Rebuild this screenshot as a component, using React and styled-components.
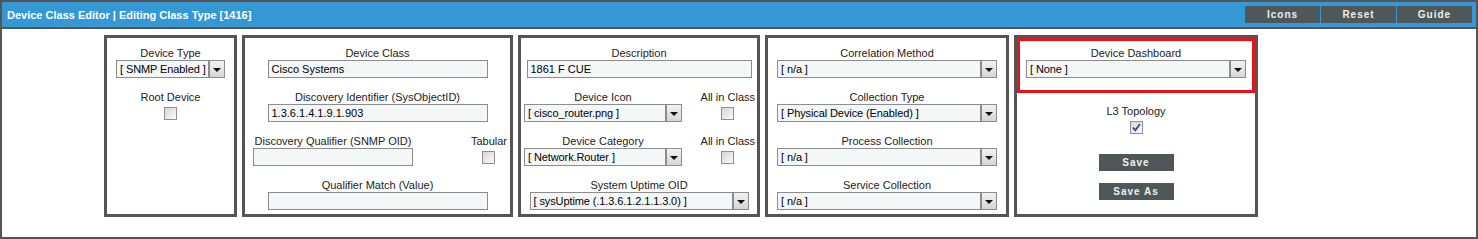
import React from 'react';
import styled, { createGlobalStyle } from 'styled-components';

const GlobalStyle = createGlobalStyle`
  body {
    margin: 0;
    background: #fff;
    font-family: "Liberation Sans", Arial, sans-serif;
  }
`;

const Frame = styled.div`
  width: 1478px;
  height: 239px;
  box-sizing: border-box;
  border: 2px solid #555;
  background: #fff;
  overflow: hidden;
`;

const Header = styled.div`
  height: 25px;
  box-sizing: content-box;
  background: #3598d4;
  border-bottom: 2px solid #555;
  display: flex;
  align-items: center;
  justify-content: space-between;
  padding: 0 4px 0 5px;
`;

const Title = styled.div`
  color: #fff;
  font-size: 11px;
  font-weight: bold;
`;

const Toolbar = styled.div`
  display: flex;
  gap: 1px;
`;

const DarkButton = styled.div`
  width: 75px;
  height: 17px;
  background: #4f5759;
  color: #eef0f0;
  font-size: 10px;
  font-weight: bold;
  letter-spacing: 1px;
  display: flex;
  align-items: center;
  justify-content: center;
`;

const Body = styled.div`
  display: flex;
  gap: 5px;
  padding: 6px 0 0 102px;
`;

const Panel = styled.div`
  width: ${(p) => p.$w}px;
  height: 182px;
  box-sizing: border-box;
  border: 3px solid #555;
  padding-top: ${(p) => (p.$flush ? 0 : 8)}px;
  display: flex;
  flex-direction: column;
  align-items: center;
  overflow: hidden;
`;

const Row = styled.div`
  align-self: stretch;
  flex-shrink: 0;
  height: 44px;
  display: flex;
  justify-content: ${(p) => (p.$split ? 'space-between' : 'center')};
  padding: 0 ${(p) => p.$pr || 0}px 0 ${(p) => p.$pl || 0}px;
`;

const Field = styled.div`
  display: flex;
  flex-direction: column;
  align-items: center;
`;

const Label = styled.div`
  font-size: 11px;
  line-height: 14px;
  color: #222;
  white-space: nowrap;
`;

const TextInput = styled.div`
  width: ${(p) => p.$w}px;
  height: 18px;
  box-sizing: border-box;
  border: 1px solid #8c8c8c;
  background: #f3f7f7;
  font-size: 11px;
  line-height: 16px;
  padding: 0 3px;
  color: #000;
  white-space: nowrap;
`;

const SelectBox = styled.div`
  width: ${(p) => p.$w}px;
  height: 18px;
  box-sizing: border-box;
  border: 1px solid #8c8c8c;
  background: #f3f7f7;
  display: flex;
  font-size: 11px;
  line-height: 16px;
  color: #000;
`;

const SelectText = styled.div`
  flex: 1;
  padding-left: 3px;
  white-space: nowrap;
  overflow: hidden;
  letter-spacing: -0.1px;
`;

const Arrow = styled.div`
  width: 16px;
  height: 16px;
  flex-shrink: 0;
  box-sizing: border-box;
  border-left: 2px solid #8c8c8c;
  background: linear-gradient(#f2f2f2, #d6d6d6);
  display: flex;
  align-items: center;
  justify-content: center;
  &::after {
    content: '';
    margin-top: 2px;
    border-left: 4px solid transparent;
    border-right: 4px solid transparent;
    border-top: 4px solid #111;
  }
`;

const Check = styled.span`
  display: block;
  width: 13px;
  height: 13px;
  margin-top: 3px;
  box-sizing: border-box;
  border: 1px solid #8f8f8f;
  background: linear-gradient(135deg, #d6d6d6, #fbfbfb);
  svg {
    display: block;
  }
`;

const Highlight = styled.div`
  align-self: stretch;
  flex-shrink: 0;
  height: 55px;
  box-sizing: border-box;
  border: 3px solid #e8141b;
  padding-top: 5px;
  display: flex;
  flex-direction: column;
  align-items: center;
`;

const Stack = styled.div`
  flex-shrink: 0;
  display: flex;
  flex-direction: column;
  align-items: center;
  margin-top: ${(p) => p.$mt}px;
`;

const Select = ({ w, value }) => (
  <SelectBox $w={w}>
    <SelectText>{value}</SelectText>
    <Arrow />
  </SelectBox>
);

const Checkbox = ({ checked }) => (
  <Check>
    {checked && (
      <svg width="11" height="11" viewBox="0 0 11 11">
        <path d="M2 5.5 L4.3 8.2 L9 2" fill="none" stroke="#34479a" strokeWidth="1.8" />
      </svg>
    )}
  </Check>
);

export default function App() {
  return (
    <>
      <GlobalStyle />
      <Frame>
        <Header>
          <Title>Device Class Editor | Editing Class Type [1416]</Title>
          <Toolbar>
            <DarkButton>Icons</DarkButton>
            <DarkButton>Reset</DarkButton>
            <DarkButton>Guide</DarkButton>
          </Toolbar>
        </Header>
        <Body>
          <Panel $w={133}>
            <Row>
              <Field>
                <Label>Device Type</Label>
                <Select w={109} value="[ SNMP Enabled ]" />
              </Field>
            </Row>
            <Row>
              <Field>
                <Label>Root Device</Label>
                <Checkbox />
              </Field>
            </Row>
          </Panel>

          <Panel $w={271}>
            <Row>
              <Field>
                <Label>Device Class</Label>
                <TextInput $w={220}>Cisco Systems</TextInput>
              </Field>
            </Row>
            <Row>
              <Field>
                <Label>Discovery Identifier (SysObjectID)</Label>
                <TextInput $w={220}>1.3.6.1.4.1.9.1.903</TextInput>
              </Field>
            </Row>
            <Row $split $pl={8} $pr={3}>
              <Field>
                <Label>Discovery Qualifier (SNMP OID)</Label>
                <TextInput $w={160} />
              </Field>
              <Field>
                <Label>Tabular</Label>
                <Checkbox />
              </Field>
            </Row>
            <Row>
              <Field>
                <Label>Qualifier Match (Value)</Label>
                <TextInput $w={220} />
              </Field>
            </Row>
          </Panel>

          <Panel $w={242}>
            <Row>
              <Field>
                <Label>Description</Label>
                <TextInput $w={225}>1861 F CUE</TextInput>
              </Field>
            </Row>
            <Row $split $pl={3} $pr={2}>
              <Field>
                <Label>Device Icon</Label>
                <Select w={158} value="[ cisco_router.png ]" />
              </Field>
              <Field>
                <Label>All in Class</Label>
                <Checkbox />
              </Field>
            </Row>
            <Row $split $pl={3} $pr={2}>
              <Field>
                <Label>Device Category</Label>
                <Select w={158} value="[ Network.Router ]" />
              </Field>
              <Field>
                <Label>All in Class</Label>
                <Checkbox />
              </Field>
            </Row>
            <Row>
              <Field>
                <Label>System Uptime OID</Label>
                <Select w={219} value="[ sysUptime (.1.3.6.1.2.1.1.3.0) ]" />
              </Field>
            </Row>
          </Panel>

          <Panel $w={244}>
            <Row>
              <Field>
                <Label>Correlation Method</Label>
                <Select w={220} value="[ n/a ]" />
              </Field>
            </Row>
            <Row>
              <Field>
                <Label>Collection Type</Label>
                <Select w={220} value="[ Physical Device (Enabled) ]" />
              </Field>
            </Row>
            <Row>
              <Field>
                <Label>Process Collection</Label>
                <Select w={220} value="[ n/a ]" />
              </Field>
            </Row>
            <Row>
              <Field>
                <Label>Service Collection</Label>
                <Select w={220} value="[ n/a ]" />
              </Field>
            </Row>
          </Panel>

          <Panel $w={244} $flush>
            <Highlight>
              <Label>Device Dashboard</Label>
              <Select w={220} value="[ None ]" />
            </Highlight>
            <Stack $mt={11}>
              <Label>L3 Topology</Label>
              <Checkbox checked />
            </Stack>
            <Stack $mt={20}>
              <DarkButton>Save</DarkButton>
            </Stack>
            <Stack $mt={12}>
              <DarkButton>Save As</DarkButton>
            </Stack>
          </Panel>
        </Body>
      </Frame>
    </>
  );
}
